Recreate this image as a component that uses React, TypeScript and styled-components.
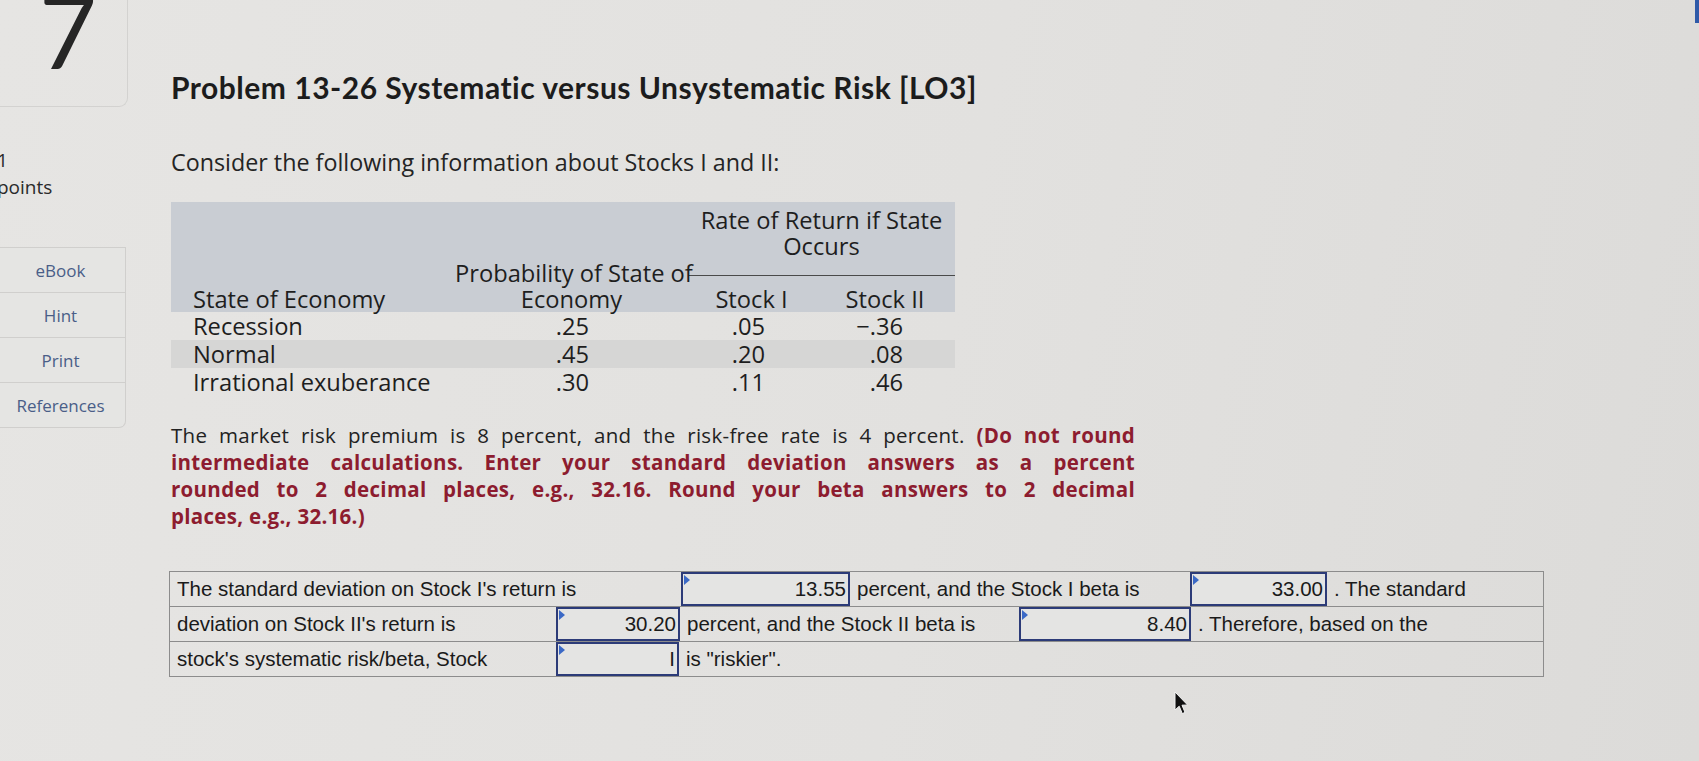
import styled, { createGlobalStyle } from 'styled-components';

const GlobalStyle = createGlobalStyle`
  html, body {
    margin: 0;
    padding: 0;
  }
  body {
    background: #e2e1df;
    font-family: "Open Sans", Lato, sans-serif;
    color: #1f1f1f;
  }
`;

const Page = styled.div`
  position: relative;
  display: flex;
  width: 1699px;
  height: 761px;
  overflow: hidden;
  background: linear-gradient(100deg, #e6e5e3 0%, #e2e1df 55%, #dcdbd9 100%);
`;

/* ---------- left rail ---------- */

const Sidebar = styled.aside`
  flex: 0 0 130px;
  margin-left: -4px;
  display: flex;
  flex-direction: column;
`;

const NumberBox = styled.div`
  box-sizing: border-box;
  height: 107px;
  margin-right: -2px;
  padding: 0 0 36px 43px;
  display: flex;
  align-items: flex-end;
  border-right: 1px solid #d3d2d0;
  border-bottom: 1px solid #d3d2d0;
  border-bottom-right-radius: 9px;
  overflow: hidden;
`;

const QuestionNumber = styled.span`
  font-family: Lato, sans-serif;
  font-size: 100px;
  line-height: 80px;
  font-weight: 400;
  color: #262626;
`;

const Points = styled.div`
  margin-top: 40px;
  padding-left: 1px;
  font-size: 19px;
  line-height: 27px;
  color: #2a2a2a;
`;

const ResourceList = styled.nav`
  margin-top: 46px;
  border: 1px solid #d0cfcd;
  border-left: none;
  border-bottom-right-radius: 7px;
  background: #e5e5e3;
`;

const ResourceButton = styled.div`
  height: 44px;
  display: flex;
  align-items: center;
  justify-content: center;
  font-size: 17px;
  color: #4a5e88;

  & + & {
    border-top: 1px solid #d0cfcd;
  }
`;

/* ---------- question ---------- */

const Main = styled.main`
  flex: 1;
  padding-left: 45px;
  display: flex;
  flex-direction: column;
  align-items: flex-start;
`;

const Title = styled.h1`
  margin: 69px 0 0;
  font-family: Lato, sans-serif;
  font-size: 30px;
  line-height: 36px;
  letter-spacing: 0.5px;
  font-weight: 700;
  color: #1c1c1c;
`;

const Lead = styled.p`
  margin: 42px 0 0;
  font-size: 23.3px;
  line-height: 30px;
  color: #242424;
`;

const DataTable = styled.table`
  margin-top: 25px;
  border-collapse: collapse;
  table-layout: fixed;
  width: 784px;
  font-size: 23.7px;
  line-height: 26px;
  color: #1e1e1e;

  th {
    font-weight: 400;
    background: #c9cdd3;
    padding: 0;
  }

  td {
    padding: 0;
    height: 28px;
    line-height: 28px;
  }
`;

const HeadCell = styled.th<{ $align?: 'left' | 'center'; $rule?: boolean; $top?: boolean }>`
  text-align: ${({ $align }) => $align ?? 'center'};
  vertical-align: bottom;
  padding-left: ${({ $align }) => ($align === 'left' ? '22px' : '0')} !important;
  padding-top: ${({ $top }) => ($top ? '5px' : '0')} !important;
  padding-bottom: ${({ $top }) => ($top ? '16px' : '0')} !important;
  border-bottom: ${({ $rule }) => ($rule ? '1px solid #4a4a4a' : 'none')};
  white-space: nowrap;
`;

const SubHead = styled.th`
  text-align: center;
  height: 26px;
  padding-top: 10px !important;
`;

const BodyRow = styled.tr<{ $shaded?: boolean }>`
  background: ${({ $shaded }) => ($shaded ? '#d6d6d5' : 'transparent')};
`;

const LabelCell = styled.td`
  padding-left: 22px !important;
  white-space: nowrap;
`;

const NumCell = styled.td<{ $pad: number }>`
  text-align: right;
  padding-right: ${({ $pad }) => $pad}px !important;
`;

const Instructions = styled.div`
  margin: 26px 0 0;
  width: 964px;
  font-size: 20.5px;
  line-height: 27px;
  letter-spacing: 0.3px;
  color: #222;
`;

const Line = styled.span<{ $last?: boolean }>`
  display: block;
  text-align: ${({ $last }) => ($last ? 'left' : 'justify')};
  text-align-last: ${({ $last }) => ($last ? 'left' : 'justify')};
  white-space: nowrap;
`;

const Emph = styled.b`
  color: #8d1c2f;
  font-weight: 700;
`;

/* ---------- answer grid ---------- */

const AnswerTable = styled.div`
  margin: 41px 0 0 -2px;
  width: 1373px;
  border: 1px solid #8c8c8c;
  font-family: "Liberation Sans", Arial, sans-serif;
  font-size: 20.5px;
  color: #1a1a1a;
`;

const AnswerRow = styled.div`
  display: flex;
  height: 34px;

  & + & {
    border-top: 1px solid #8c8c8c;
  }
`;

const TextCell = styled.div<{ $w?: number }>`
  box-sizing: border-box;
  flex: ${({ $w }) => ($w ? `0 0 ${$w}px` : '1')};
  display: flex;
  align-items: center;
  padding-left: 7px;
  white-space: nowrap;

  & + & {
    border-left: 1px solid #8c8c8c;
  }
`;

const InputCell = styled.div<{ $w: number }>`
  position: relative;
  box-sizing: border-box;
  flex: 0 0 ${({ $w }) => $w}px;
  display: flex;
  align-items: center;
  justify-content: flex-end;
  padding-right: 2px;
  border: 2px solid #2c3b78;
  background: #e4e4e3;

  &::before {
    content: '';
    position: absolute;
    top: 1px;
    left: 1px;
    border-left: 6px solid #3b69c6;
    border-top: 5px solid transparent;
    border-bottom: 5px solid transparent;
  }
`;

const Cursor = styled.svg`
  position: absolute;
  left: 1174px;
  top: 691px;
`;

const ScrollMark = styled.div`
  position: absolute;
  right: 0;
  top: 0;
  width: 4px;
  height: 23px;
  background: #2f5aa8;
`;

const resources = ['eBook', 'Hint', 'Print', 'References'];

const rows = [
  { state: 'Recession', p: '.25', a: '.05', b: '\u2212.36' },
  { state: 'Normal', p: '.45', a: '.20', b: '.08' },
  { state: 'Irrational exuberance', p: '.30', a: '.11', b: '.46' },
];

export default function App() {
  return (
    <Page>
      <GlobalStyle />
      <Sidebar>
        <NumberBox>
          <QuestionNumber>7</QuestionNumber>
        </NumberBox>
        <Points>
          1
          <br />
          points
        </Points>
        <ResourceList>
          {resources.map((r) => (
            <ResourceButton key={r}>{r}</ResourceButton>
          ))}
        </ResourceList>
      </Sidebar>

      <Main>
        <Title>Problem 13-26 Systematic versus Unsystematic Risk [LO3]</Title>
        <Lead>Consider the following information about Stocks I and II:</Lead>

        <DataTable>
          <colgroup>
            <col style={{ width: 284 }} />
            <col style={{ width: 233 }} />
            <col style={{ width: 127 }} />
            <col style={{ width: 140 }} />
          </colgroup>
          <thead>
            <tr>
              <HeadCell rowSpan={2} $align="left">
                State of Economy
              </HeadCell>
              <HeadCell rowSpan={2}>
                Probability of State of
                <br />
                Economy
              </HeadCell>
              <HeadCell colSpan={2} $rule $top>
                Rate of Return if State
                <br />
                Occurs
              </HeadCell>
            </tr>
            <tr>
              <SubHead>Stock I</SubHead>
              <SubHead>Stock II</SubHead>
            </tr>
          </thead>
          <tbody>
            {rows.map((r, i) => (
              <BodyRow key={r.state} $shaded={i === 1}>
                <LabelCell>{r.state}</LabelCell>
                <NumCell $pad={99}>{r.p}</NumCell>
                <NumCell $pad={50}>{r.a}</NumCell>
                <NumCell $pad={52}>{r.b}</NumCell>
              </BodyRow>
            ))}
          </tbody>
        </DataTable>

        <Instructions>
          <Line>
            The market risk premium is 8 percent, and the risk-free rate is 4 percent.{' '}
            <Emph>(Do not round</Emph>
          </Line>
          <Line>
            <Emph>intermediate calculations. Enter your standard deviation answers as a percent</Emph>
          </Line>
          <Line>
            <Emph>rounded to 2 decimal places, e.g., 32.16. Round your beta answers to 2 decimal</Emph>
          </Line>
          <Line $last>
            <Emph>places, e.g., 32.16.)</Emph>
          </Line>
        </Instructions>

        <AnswerTable>
          <AnswerRow>
            <TextCell $w={511}>The standard deviation on Stock I's return is</TextCell>
            <InputCell $w={169}>13.55</InputCell>
            <TextCell $w={340}>percent, and the Stock I beta is</TextCell>
            <InputCell $w={137}>33.00</InputCell>
            <TextCell>. The standard</TextCell>
          </AnswerRow>
          <AnswerRow>
            <TextCell $w={386}>deviation on Stock II's return is</TextCell>
            <InputCell $w={124}>30.20</InputCell>
            <TextCell $w={339}>percent, and the Stock II beta is</TextCell>
            <InputCell $w={172}>8.40</InputCell>
            <TextCell>. Therefore, based on the</TextCell>
          </AnswerRow>
          <AnswerRow>
            <TextCell $w={386}>stock's systematic risk/beta, Stock</TextCell>
            <InputCell $w={123}>I</InputCell>
            <TextCell>is "riskier".</TextCell>
          </AnswerRow>
        </AnswerTable>
      </Main>

      <Cursor width="16" height="25" viewBox="0 0 16 25">
        <path
          d="M1 1 L1 19 L5.2 15.2 L8.3 22.6 L11 21.4 L8 14.2 L13.6 14 Z"
          fill="#111"
          stroke="#f2f2f2"
          strokeWidth="1"
          strokeLinejoin="round"
        />
      </Cursor>
      <ScrollMark />
    </Page>
  );
}
